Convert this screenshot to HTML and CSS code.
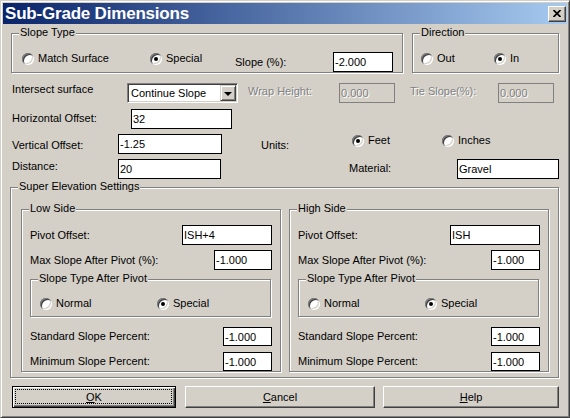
FILE: index.html
```html
<!DOCTYPE html>
<html>
<head>
<meta charset="utf-8">
<link rel="stylesheet" href="styles.css">
</head>
<body>
<div class="window">
  <div class="titlebar">
    <span class="title">Sub-Grade Dimensions</span>
    <span class="close"><svg width="8" height="7" viewBox="0 0 8 7"><path d="M0.5 0 L7.5 7 M7.5 0 L0.5 7" stroke="#000" stroke-width="1.7" fill="none"/></svg></span>
  </div>
  <div class="client">
    <div class="r1">
      <div class="group slope-type">
        <span class="gt">Slope Type</span>
        <span class="ri w-match"><span class="rb"></span>Match Surface</span>
        <span class="ri w-special"><span class="rb on"></span>Special</span>
        <span class="lbl w-slope mt4">Slope (%):</span>
        <span class="inp w60">-2.000</span>
      </div>
      <div class="group direction">
        <span class="gt">Direction</span>
        <span class="ri w-out"><span class="rb"></span>Out</span>
        <span class="ri"><span class="rb on"></span>In</span>
      </div>
    </div>

    <div class="row r2">
      <span class="lbl w115">Intersect surface</span>
      <span class="select"><span class="sel-text">Continue Slope</span><span class="sel-btn"><span class="tri"></span></span></span>
      <span class="lbl dis ml10 w91 mt2">Wrap Height:</span>
      <span class="inp dis-inp w56">0.000</span>
      <span class="lbl dis ml15 w88 mt2">Tie Slope(%):</span>
      <span class="inp dis-inp w56">0.000</span>
    </div>

    <div class="row r3">
      <span class="lbl w119 mt3">Horizontal Offset:</span>
      <span class="inp w101">32</span>
    </div>

    <div class="row r4">
      <span class="lbl w106 mt5">Vertical Offset:</span>
      <span class="inp w104">-1.25</span>
      <span class="lbl ml39 w91 mt5">Units:</span>
      <span class="ri w90"><span class="rb on"></span>Feet</span>
      <span class="ri"><span class="rb"></span>Inches</span>
    </div>

    <div class="row r5">
      <span class="lbl w106 mt1">Distance:</span>
      <span class="inp w103">20</span>
      <span class="lbl ml128 w108 mt3">Material:</span>
      <span class="inp w102">Gravel</span>
    </div>

    <div class="group super">
      <span class="gt">Super Elevation Settings</span>
      <div class="group side">
        <span class="gt">Low Side</span>
        <div class="srow"><span class="lbl">Pivot Offset:</span><span class="inp w90">ISH+4</span></div>
        <div class="srow mt5"><span class="lbl">Max Slope After Pivot (%):</span><span class="inp w58">-1.000</span></div>
        <div class="group stap">
          <span class="gt">Slope Type After Pivot</span>
          <span class="ri w117"><span class="rb"></span>Normal</span>
          <span class="ri"><span class="rb on"></span>Special</span>
        </div>
        <div class="srow h19 mt10"><span class="lbl">Standard Slope Percent:</span><span class="inp w49 h19">-1.000</span></div>
        <div class="srow h19 mt6"><span class="lbl">Minimum Slope Percent:</span><span class="inp w49 h19">-1.000</span></div>
      </div>
      <div class="group side high">
        <span class="gt">High Side</span>
        <div class="srow"><span class="lbl">Pivot Offset:</span><span class="inp w90">ISH</span></div>
        <div class="srow mt5"><span class="lbl">Max Slope After Pivot (%):</span><span class="inp w49">-1.000</span></div>
        <div class="group stap">
          <span class="gt">Slope Type After Pivot</span>
          <span class="ri w117"><span class="rb"></span>Normal</span>
          <span class="ri"><span class="rb on"></span>Special</span>
        </div>
        <div class="srow h19 mt10"><span class="lbl">Standard Slope Percent:</span><span class="inp w49 h19">-1.000</span></div>
        <div class="srow h19 mt6"><span class="lbl">Minimum Slope Percent:</span><span class="inp w49 h19">-1.000</span></div>
      </div>
    </div>

    <div class="buttons">
      <span class="btn default w164"><span><u>O</u>K</span></span>
      <span class="btn ml9 w190"><span><u>C</u>ancel</span></span>
      <span class="btn ml8 w176"><span><u>H</u>elp</span></span>
    </div>
  </div>
</div>
</body>
</html>
```
FILE: styles.css
```css
html, body {
  margin: 0;
  padding: 0;
  background: #d4d0c8;
}
body {
  font-family: "Liberation Sans", Arial, sans-serif;
  font-size: 11px;
  color: #000;
}
.window {
  width: 570px;
  height: 418px;
  box-sizing: border-box;
  background: #d4d0c8;
  border: 1px solid;
  border-color: #d4d0c8 #404040 #404040 #d4d0c8;
  box-shadow: inset 1px 1px 0 #fff, inset -1px -1px 0 #808080;
  padding: 2px;
  overflow: hidden;
}
.titlebar {
  height: 21px;
  display: flex;
  align-items: center;
  padding-left: 2px;
  background: linear-gradient(to right, #0a246a, #a6caf0);
}
.title {
  flex: 1;
  color: #fff;
  font-weight: bold;
  font-size: 17px;
  letter-spacing: -0.2px;
  line-height: 21px;
  white-space: nowrap;
}
.close {
  width: 18px;
  height: 16px;
  box-sizing: border-box;
  margin-right: 1px;
  background: #d4d0c8;
  border: 1px solid;
  border-color: #fff #404040 #404040 #fff;
  box-shadow: inset -1px -1px 0 #808080;
  display: flex;
  align-items: center;
  justify-content: center;
}
.close svg { display: block; }

.client { padding-left: 7px; }

.group {
  position: relative;
  box-sizing: border-box;
  border: 1px solid #808080;
  box-shadow: inset 1px 1px 0 #fff, 1px 1px 0 #fff;
}
.gt {
  position: absolute;
  top: -8px;
  left: 7px;
  padding: 0 1px;
  line-height: 13px;
  background: #d4d0c8;
  white-space: nowrap;
}

.r1 {
  display: flex;
  margin-top: 9px;
  margin-left: 1px;
}
.slope-type {
  width: 392px;
  height: 40px;
  padding: 18px 0 0 10px;
  display: flex;
  align-items: flex-start;
}
.direction {
  width: 147px;
  height: 40px;
  margin-left: 9px;
  padding: 18px 0 0 8px;
  display: flex;
  align-items: flex-start;
}

.ri {
  display: flex;
  align-items: center;
  gap: 4px;
  height: 13px;
  line-height: 13px;
  white-space: nowrap;
  flex: none;
}
.rb {
  position: relative;
  width: 12px;
  height: 12px;
  flex: none;
  border-radius: 50%;
  background: #fff;
  box-shadow: inset 1px 1px 0 #808080, inset -1px -1px 0 #fff, inset 2px 2px 0 #404040, inset -2px -2px 0 #d4d0c8;
}
.rb.on::after {
  content: "";
  position: absolute;
  left: 4px;
  top: 4px;
  width: 4px;
  height: 4px;
  border-radius: 50%;
  background: #000;
}

.lbl {
  line-height: 13px;
  white-space: nowrap;
  flex: none;
}
.lbl.dis, .inp.dis-inp {
  color: #808080;
  text-shadow: 1px 1px 0 #fff;
}

.inp {
  box-sizing: border-box;
  height: 20px;
  flex: none;
  border: 1px solid #000;
  background: #fff;
  padding-left: 1px;
  display: flex;
  align-items: center;
  white-space: nowrap;
  overflow: hidden;
}
.inp.dis-inp {
  border-color: #808080;
  background: #d4d0c8;
}
.h19 { height: 19px; }

.row {
  display: flex;
  align-items: flex-start;
  height: 20px;
  padding-left: 2px;
}
.r2 { margin-top: 10px; }
.r3 { margin-top: 6px; }
.r4 { margin-top: 5px; }
.r5 { margin-top: 5px; }

.select {
  box-sizing: border-box;
  width: 111px;
  height: 20px;
  flex: none;
  display: flex;
  border: 1px solid;
  border-color: #808080 #fff #fff #808080;
  box-shadow: inset 1px 1px 0 #404040, inset -1px -1px 0 #d4d0c8;
  background: #fff;
  padding: 1px;
}
.sel-text {
  flex: 1;
  padding-left: 2px;
  display: flex;
  align-items: center;
  white-space: nowrap;
}
.sel-btn {
  box-sizing: border-box;
  width: 16px;
  height: 16px;
  background: #d4d0c8;
  border: 1px solid;
  border-color: #d4d0c8 #404040 #404040 #d4d0c8;
  box-shadow: inset 1px 1px 0 #fff, inset -1px -1px 0 #808080;
  display: flex;
  align-items: center;
  justify-content: center;
}
.tri {
  width: 0;
  height: 0;
  border-left: 4px solid transparent;
  border-right: 4px solid transparent;
  border-top: 4px solid #000;
  margin-top: 1px;
}

.super {
  margin-top: 8px;
  width: 549px;
  height: 191px;
  padding: 21px 0 0 10px;
  display: flex;
  gap: 8px;
}
.side {
  width: 260px;
  height: 163px;
  padding: 15px 8px 0 8px;
  display: flex;
  flex-direction: column;
}
.srow {
  display: flex;
  justify-content: space-between;
  align-items: center;
  height: 20px;
  flex: none;
}
.srow.h19 { height: 19px; }
.stap {
  margin-top: 9px;
  margin-right: 1px;
  height: 38px;
  flex: none;
  padding: 17px 0 0 9px;
  display: flex;
  align-items: flex-start;
}

.buttons {
  display: flex;
  margin-top: 8px;
  padding-left: 2px;
}
.btn {
  position: relative;
  box-sizing: border-box;
  height: 22px;
  flex: none;
  border: 1px solid;
  border-color: #fff #404040 #404040 #fff;
  box-shadow: inset -1px -1px 0 #808080;
  background: #d4d0c8;
  display: flex;
  align-items: center;
  justify-content: center;
  line-height: 13px;
}
.btn.default {
  border: 1px solid #000;
  box-shadow: inset 1px 1px 0 #fff, inset -1px -1px 0 #404040, inset -2px -2px 0 #808080;
}
.btn.default::after {
  content: "";
  position: absolute;
  left: 2px;
  top: 2px;
  right: 3px;
  bottom: 3px;
  border: 1px dotted #000;
}

.w-match { width: 128px; }
.w-special { width: 85px; }
.w-slope { width: 98px; }
.w-out { width: 73px; }
.w49 { width: 49px; }
.w56 { width: 56px; }
.w58 { width: 58px; }
.w60 { width: 60px; }
.w88 { width: 88px; }
.w90 { width: 90px; }
.w91 { width: 91px; }
.w101 { width: 101px; }
.w102 { width: 102px; }
.w103 { width: 103px; }
.w104 { width: 104px; }
.w106 { width: 106px; }
.w108 { width: 108px; }
.w115 { width: 115px; }
.w117 { width: 117px; }
.w119 { width: 119px; }
.w164 { width: 164px; }
.w176 { width: 176px; }
.w190 { width: 190px; }
.ml8 { margin-left: 8px; }
.ml9 { margin-left: 9px; }
.ml10 { margin-left: 10px; }
.ml15 { margin-left: 15px; }
.ml39 { margin-left: 39px; }
.ml128 { margin-left: 128px; }
.mt1 { margin-top: 1px; }
.mt2 { margin-top: 2px; }
.mt3 { margin-top: 3px; }
.mt4 { margin-top: 4px; }
.mt5 { margin-top: 5px; }
.mt6 { margin-top: 6px; }
.mt10 { margin-top: 10px; }
```
